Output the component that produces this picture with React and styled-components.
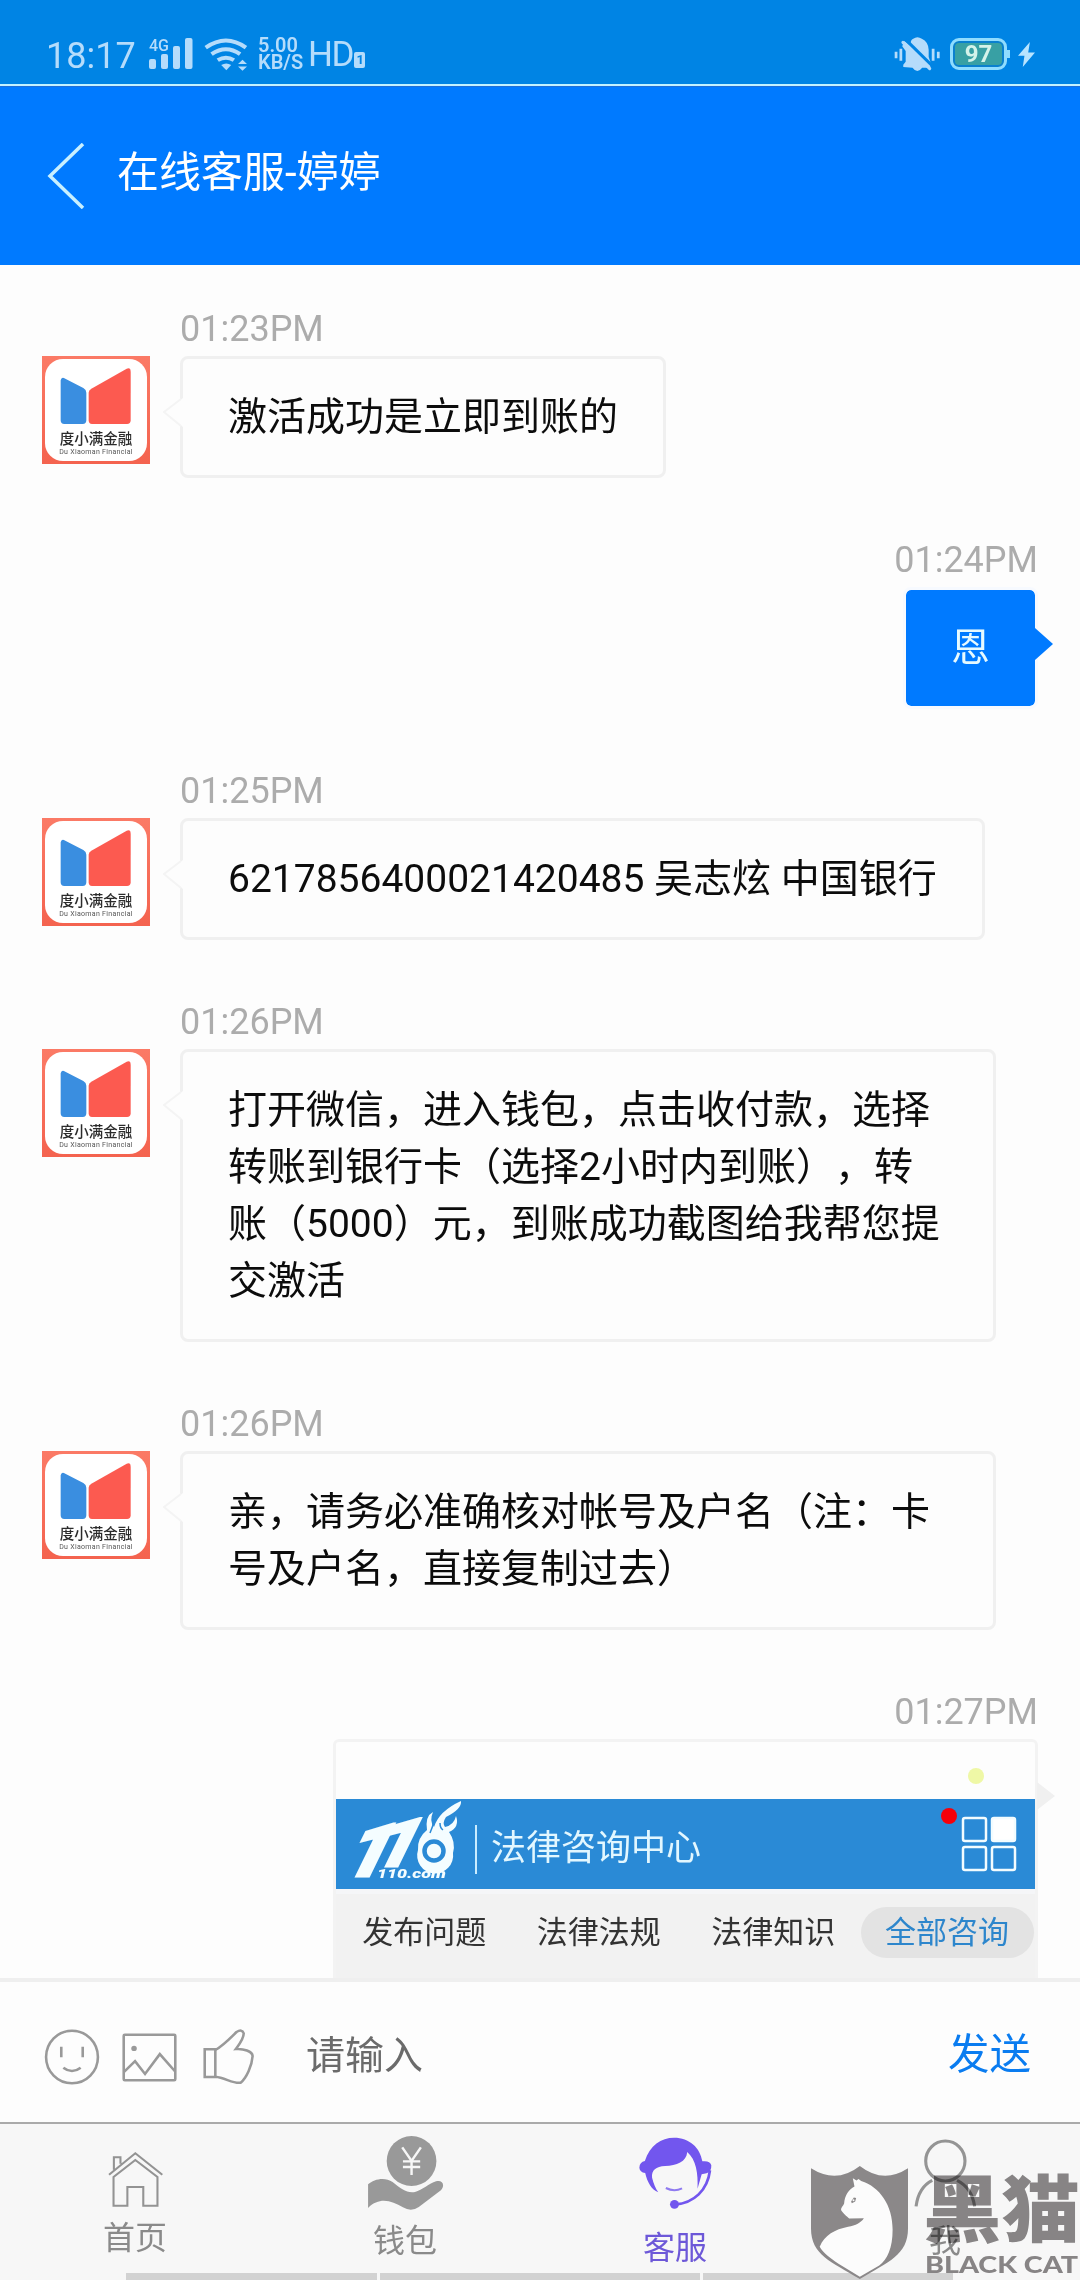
import React from "react";
import styled, { createGlobalStyle } from "styled-components";

const GlobalStyle = createGlobalStyle`
  * {
    box-sizing: border-box;
  }
  body {
    margin: 0;
    background: #fdfdfd;
    font-family: Roboto, "Noto Sans CJK SC", sans-serif;
    text-spacing-trim: space-all;
  }
  svg {
    display: block;
    flex: none;
  }
`;

const Screen = styled.div`
  position: relative;
  display: flex;
  flex-direction: column;
  width: 1080px;
  height: 2280px;
  overflow: hidden;
  background: #fdfdfd;
`;

const StatusBar = styled.div`
  display: flex;
  align-items: center;
  height: 86px;
  padding: 24px 45px 0 46px;
  border-bottom: 2px solid #c4f2ff;
  background: #0084e4;
  color: #b5dcfb;
`;

const Clock = styled.div`
  width: 103px;
  margin-top: 3px;
  font-size: 36px;
  line-height: 44px;
`;

const Speed = styled.div`
  width: 50px;
  margin-left: 10px;
  font-size: 20px;
  font-weight: 600;
  line-height: 17px;
`;

const Hd = styled.div`
  display: flex;
  align-items: flex-end;
  margin-top: 1px;
  font-size: 35px;
  line-height: 40px;
  letter-spacing: -1.5px;
`;

const SimBadge = styled.span`
  width: 11px;
  height: 16px;
  margin: 0 0 7px 1px;
  border-radius: 2px;
  background: #b5dcfb;
  color: #0084e4;
  font-size: 13px;
  font-weight: 700;
  line-height: 16px;
  text-align: center;
`;

const StatusRight = styled.div`
  display: flex;
  align-items: center;
  margin-left: auto;
`;

const Battery = styled.div`
  display: flex;
  align-items: center;
  justify-content: center;
  width: 57px;
  height: 32px;
  margin-left: 10px;
  border: 3px solid #8fdcff;
  border-radius: 9px;
  background: #38a0a4;
  box-shadow: inset 0 0 0 2px #0a80cf;
  color: #d4f3ea;
  font-size: 24px;
  font-weight: 700;
`;

const BatteryNub = styled.div`
  width: 3px;
  height: 8px;
  margin-right: 8px;
  background: #8fdcff;
`;

const Header = styled.div`
  display: flex;
  align-items: center;
  height: 179px;
  padding: 0 47px;
  border-top: 1px solid #1f6fd8;
  background: #007aff;
`;

const Title = styled.div`
  margin: -6px 0 0 30px;
  color: #fff;
  font-size: 42px;
  line-height: 60px;
`;

const Chat = styled.div`
  flex: none;
  height: 1713px;
  padding: 43px 42px 0;
  overflow: hidden;
`;

const Row = styled.div`
  display: flex;
  justify-content: ${(p) => (p.$mine ? "flex-end" : "flex-start")};
  margin-bottom: 61px;
`;

const AvatarFrame = styled.div`
  width: 108px;
  height: 108px;
  margin: 48px 30px 0 0;
  padding: 3px;
  background: linear-gradient(#fb7a66, #f4634f);
`;

const AvatarCard = styled.div`
  display: flex;
  flex-direction: column;
  align-items: center;
  height: 102px;
  padding-top: 8px;
  border-radius: 18px;
  background: #fff;
`;

const AvatarName = styled.div`
  margin-top: 6px;
  color: #2b2b2b;
  font-size: 14.5px;
  font-weight: 500;
  line-height: 18px;
  white-space: nowrap;
`;

const AvatarCaption = styled.div`
  color: #555;
  font-size: 7px;
  line-height: 6px;
  letter-spacing: 0.3px;
  white-space: nowrap;
`;

const Stack = styled.div`
  display: flex;
  flex-direction: column;
  align-items: ${(p) => (p.$mine ? "flex-end" : "flex-start")};
`;

const Time = styled.div`
  margin-bottom: 6px;
  color: #acacac;
  font-size: 36px;
  line-height: 42px;
`;

const Bubble = styled.div`
  position: relative;
  padding: 30px 45px 29px;
  border: 3px solid ${(p) => (p.$mine ? "#f7faff" : "#f0f0f0")};
  border-radius: 8px;
  background: ${(p) => (p.$mine ? "#007aff" : "#fdfdfd")};
  background-clip: padding-box;
  color: ${(p) => (p.$mine ? "#e6faff" : "#0c0c0c")};
  font-size: 39px;
  line-height: 57px;
  white-space: pre;
  ${(p) => p.$wide && "width: 816px;"}
`;

const Tail = styled.svg`
  position: absolute;
  top: 38px;
  ${(p) => (p.$mine ? `right: ${p.$offset || -18}px;` : "left: -20px;")}
`;

const Shot = styled.div`
  position: relative;
  width: 705px;
  height: 300px;
  border: 3px solid #f3f3f3;
  border-radius: 6px;
`;

const ShotTop = styled.div`
  display: flex;
  justify-content: flex-end;
  height: 57px;
  padding: 26px 51px 0 0;
`;

const Dot = styled.div`
  width: 16px;
  height: 16px;
  border-radius: 50%;
  background: ${(p) => p.$color};
`;

const SiteBar = styled.div`
  display: flex;
  align-items: center;
  height: 90px;
  padding: 0 18px 0 14px;
  background: #2a8ad6;
`;

const SiteDivider = styled.div`
  width: 2px;
  height: 49px;
  margin: 10px 14px 0 13px;
  background: #c9ecff;
`;

const SiteName = styled.div`
  margin-top: 9px;
  color: #e2f7ff;
  font-size: 35px;
  line-height: 50px;
`;

const SiteMenu = styled.div`
  display: flex;
  gap: 4px;
  margin-left: auto;

  ${Dot} {
    margin-top: -8px;
  }
`;

const SiteTabs = styled.div`
  display: flex;
  height: 150px;
  padding: 13px 0 0 1px;
  border-top: 5px solid #f5f6f8;
  background: #f2f2f2;
`;

const SiteTab = styled.div`
  width: ${(p) => (p.$active ? 173 : 174.5)}px;
  height: 51px;
  border-radius: 26px;
  background: ${(p) => (p.$active ? "#e3e3e3" : "none")};
  color: ${(p) => (p.$active ? "#2d86cc" : "#333")};
  font-size: 31px;
  line-height: 51px;
  text-align: center;
`;

const InputBar = styled.div`
  display: flex;
  align-items: center;
  flex: none;
  height: 144px;
  padding: 10px 49px 0 44px;
  border-top: 4px solid #efefef;
  background: #fdfdfd;
`;

const Placeholder = styled.div`
  margin: -2px 0 0 51px;
  color: #6b6b6b;
  font-size: 39px;
  line-height: 50px;
`;

const Send = styled.div`
  margin: -4px 0 0 auto;
  color: #0a7cf0;
  font-size: 41.5px;
  line-height: 50px;
`;

const TabBar = styled.div`
  display: flex;
  flex: none;
  height: 151px;
  border-top: 2px solid #aaa;
  background: #f7f7f7;
`;

const Tab = styled.div`
  display: flex;
  flex-direction: column;
  align-items: center;
  width: 270px;
  padding-top: ${(p) => p.$top}px;
  gap: ${(p) => p.$gap}px;
  color: ${(p) => (p.$active ? "#6d58d8" : "#8a8a8a")};
  font-size: 32px;
  line-height: 32px;
`;

const NavStrip = styled.div`
  display: flex;
  gap: 3px;
  flex: none;
  height: 7px;
  padding: 0 127px 0 126px;
  background: #f7f7f7;
`;

const NavPiece = styled.div`
  flex: ${(p) => p.$size};
  background: #d2d2d2;
`;

const Watermark = styled.div`
  position: absolute;
  right: 0;
  bottom: 0;
  display: flex;
  width: 269px;
  height: 114px;
  color: #8b8889;
`;

const WatermarkText = styled.div`
  margin-left: 16px;
  mix-blend-mode: multiply;
`;

const Drawing = ({ w, h, box, children, ...rest }) => (
  <svg width={w} height={h} viewBox={box} preserveAspectRatio="none" fill="none" {...rest}>
    {children}
  </svg>
);

const SignalIcon = () => (
  <Drawing w={44} h={32} box="0 0 44 32" fill="#b5dcfb">
    <text x="0" y="13" fontSize="16" fontWeight="500" fontFamily="Roboto">
      4G
    </text>
    <rect x="0" y="21" width="7" height="10" rx="2" />
    <rect x="12" y="16" width="7" height="15" rx="2" />
    <rect x="24" y="8" width="7" height="23" rx="2" />
    <rect x="36" y="0" width="7.5" height="31" rx="2" />
  </Drawing>
);

const WifiGap = styled.div`
  margin-left: 11px;
`;

const WifiIcon = () => (
  <WifiGap>
    <Drawing w={44} h={33} box="590 112 128 100" stroke="#b5dcfb" strokeWidth="12">
      <path d="M595 141Q654 98 712 141" />
      <path d="M612 161Q654 131 695 161" />
      <path d="M630 179Q654 164 677 179" />
      <path d="M640 194Q655 184 669 194L655 210Z" fill="#b5dcfb" stroke="none" />
      <path d="M689 191L702 178L715 191ZM689 198L702 211L715 198Z" fill="#b5dcfb" stroke="none" />
    </Drawing>
  </WifiGap>
);

const MuteIcon = () => (
  <Drawing w={46} h={36} box="1030 107 134 108">
    <path
      d="M1057 200V193L1064 184V152L1054 138L1060 122L1078 136Q1077 118 1086 115Q1098 106 1111 115Q1130 124 1131 148V170L1136 185V202H1112Q1098 222 1084 202Z"
      fill="#b5dcfb"
    />
    <path d="M1064 118L1142 197" stroke="#0084e4" strokeWidth="9" />
    <path d="M1056 126L1134 205" stroke="#b5dcfb" strokeWidth="9" strokeLinecap="round" />
    <path d="M1050 145V181M1144 145V181" stroke="#b5dcfb" strokeWidth="8" />
    <path d="M1036 154V174M1159 154V174" stroke="#b5dcfb" strokeWidth="8" />
  </Drawing>
);

const BoltIcon = () => (
  <Drawing w={17} h={25} box="1389 124 50 76">
    <path d="M1424 124L1389 166H1408L1403 200L1439 156H1419Z" fill="#b8e4ff" />
  </Drawing>
);

const BackIcon = () => (
  <Drawing w={40} h={66} box="0 0 40 66">
    <path d="M36 1L3 33L36 65" stroke="#c8f0ff" strokeWidth="3.5" />
  </Drawing>
);

const Avatar = () => (
  <AvatarFrame>
    <AvatarCard>
      <Drawing w={72} h={58} box="180 228 216 174">
        <path d="M182 268Q184 256 196 263L250 291Q259 296 259 305V388Q259 399 248 399H193Q182 399 182 388Z" fill="#3a8ee0" />
        <path d="M266 305Q266 298 274 293L380 233Q392 228 392 242V388Q392 399 381 399H276Q266 399 266 388Z" fill="#fc5a50" />
      </Drawing>
      <AvatarName>度小满金融</AvatarName>
      <AvatarCaption>Du Xiaoman Financial</AvatarCaption>
    </AvatarCard>
  </AvatarFrame>
);

const Message = ({ time, mine, wide, children }) => (
  <Row $mine={mine}>
    {!mine && <Avatar />}
    <Stack $mine={mine}>
      <Time>{time}</Time>
      <Bubble $mine={mine} $wide={wide}>
        {mine ? (
          <Tail $mine width="18" height="32" viewBox="0 0 18 32">
            <path d="M0 0L18 16L0 32Z" fill="#007aff" />
          </Tail>
        ) : (
          <Tail width="20" height="32" viewBox="0 0 20 32">
            <path d="M20 1L2 15L20 30Z" fill="#fdfdfd" />
            <path d="M18 2L1 15L18 29" fill="none" stroke="#f4f4f4" strokeWidth="2" />
          </Tail>
        )}
        {children}
      </Bubble>
    </Stack>
  </Row>
);

// Flaming "110" mark of the legal consulting site
const SiteLogo = () => (
  <Drawing w={112} h={90} box="0 0 112 90" fill="#f4fdff">
    <g fontFamily="Roboto" fontWeight="900">
      <g stroke="#f4fdff" strokeWidth="3">
        <text transform="translate(-11 77) skewX(-26)" fontSize="73">
          1
        </text>
        <text transform="translate(20 67) skewX(-26)" fontSize="67">
          1
        </text>
      </g>
      <text x="27" y="79" fontSize="12" fontStyle="italic" textLength="69" lengthAdjust="spacingAndGlyphs">
        110.com
      </text>
    </g>
    <path d="M68 51Q67 39 77 31Q75 17 83 13Q79 22 84 28Q89 12 111 2Q112 10 96 18Q92 24 95 28Q104 26 106 17Q110 28 99 33Q106 43 103 54A18 18 0 1 1 68 51Z" />
    <circle cx="84" cy="52" r="9.500" stroke="#2a8ad6" strokeWidth="4.500" />
    <path d="M84 20Q83 28 80 34M90 24Q90 29 93 31" stroke="#2a8ad6" strokeWidth="1.500" fill="none" />
  </Drawing>
);

const GridIcon = () => (
  <Drawing w={56} h={56} box="0 0 56 56" stroke="#f2fcff" strokeWidth="2.500">
    <rect x="2" y="2" width="23" height="23" rx="2" />
    <rect x="31" y="2" width="23" height="23" rx="2" fill="#fff" />
    <rect x="2" y="31" width="23" height="23" rx="2" />
    <rect x="31" y="31" width="23" height="23" rx="2" />
  </Drawing>
);

const InputIcons = styled.div`
  display: flex;
  align-items: center;
  width: 211px;

  svg:nth-child(2) {
    margin: 0 26px 0 22px;
  }
`;

const SmileIcon = () => (
  <Drawing w={56} h={56} box="128 175 162 168" stroke="#999" strokeWidth="7.500">
    <ellipse cx="209" cy="259" rx="75" ry="79" />
    <path d="M178 228V260M240 228V260M184 291Q209 311 234 291" />
  </Drawing>
);

const PictureIcon = () => (
  <Drawing w={55} h={49} box="356 185 160 146" stroke="#999" strokeWidth="7.500">
    <rect x="361" y="190" width="150" height="136" rx="3" />
    <circle cx="391" cy="231" r="8" fill="#999" stroke="none" />
    <path d="M362 301L394 269L423 307L466 248L510 299" />
  </Drawing>
);

const ThumbIcon = () => (
  <Drawing w={51} h={56} box="590 175 149 168" stroke="#999" strokeWidth="7.500">
    <path d="M595 236H626V319H595Z" />
    <path d="M626 238C648 226 670 202 688 184Q704 174 709 188C709 205 697 220 686 235C708 233 734 242 735 256C733 285 717 322 700 336C678 340 655 321 626 318" />
  </Drawing>
);

const HomeIcon = () => (
  <Drawing w={55} h={55} box="313 545 159 165" stroke="#939393" strokeWidth="6">
    <path d="M330 598V561H349V580M316 613L392 549L470 613" />
    <path d="M329 706V620L392 569L456 620V706H415V650H369V706Z" />
  </Drawing>
);

const WalletIcon = () => (
  <Drawing w={78} h={74} box="1067 497 226 222">
    <ellipse cx="1199" cy="572" rx="72" ry="75" fill="#999" />
    <path
      d="M1172 531L1199 572L1226 531M1199 572V614M1174 573H1224M1174 590H1224"
      stroke="#f7f7f7"
      strokeWidth="7"
    />
    <path
      d="M1073 642C1090 626 1122 619 1144 635C1167 655 1187 670 1209 665C1230 659 1250 640 1270 633C1289 628 1297 645 1284 660L1220 710Q1198 726 1174 711C1142 692 1107 678 1073 713Z"
      fill="#999"
    />
  </Drawing>
);

const ServiceIcon = () => (
  <Drawing w={73} h={72} box="286 500 212 216">
    <path
      d="M303 572C318 525 350 502 388 502C432 502 464 532 470 573Q492 570 496 585Q497 605 482 609L468 612L456 655C458 610 452 568 426 545C424 575 395 586 362 587C335 588 322 600 324 622C328 640 335 655 342 666C322 658 310 635 304 608Q288 605 287 592Q288 575 303 572Z"
      fill="#7256ee"
    />
    <path d="M364 653Q388 666 411 654" stroke="#8f7af0" strokeWidth="6" />
    <path d="M492 600C485 660 445 698 392 702" stroke="#7256ee" strokeWidth="8" />
    <circle cx="389" cy="702" r="13" fill="#7256ee" />
  </Drawing>
);

const UserIcon = () => (
  <Drawing w={62} h={68} box="1089 508 180 204" stroke="#949494" strokeWidth="9">
    <ellipse cx="1180" cy="574" rx="57" ry="60" />
    <path d="M1095 710C1100 670 1115 646 1142 632M1214 632C1245 648 1260 675 1265 710" />
  </Drawing>
);

const CatShield = () => (
  <Drawing w={97} h={114} box="94 77 290 343">
    <path
      d="M94 84Q170 132 240 77Q310 132 384 84V265C384 345 325 365 240 417C155 365 94 345 94 265Z"
      fill="#8b8889"
    />
    <path
      d="M219 114L230 121L236 116L244 122C300 140 338 195 338 268C338 325 322 358 298 376L240 410L175 370C148 352 130 338 120 320C135 285 165 268 205 260C228 255 243 248 252 234L208 235C200 228 194 224 185 212C181 204 190 198 193 190C195 165 207 148 224 139Z"
      fill="#fcfcfc"
    />
    <path d="M214 184L222 172L229 173L226 184L216 189Z" fill="#8b8889" />
    <circle cx="221" cy="180" r="3" fill="#fcfcfc" />
  </Drawing>
);

const App = () => (
  <Screen lang="zh-CN">
    <GlobalStyle />
    <StatusBar>
      <Clock>18:17</Clock>
      <SignalIcon />
      <WifiIcon />
      <Speed>
        5.00
        <br />
        KB/S
      </Speed>
      <Hd>
        HD<SimBadge>1</SimBadge>
      </Hd>
      <StatusRight>
        <MuteIcon />
        <Battery>97</Battery>
        <BatteryNub />
        <BoltIcon />
      </StatusRight>
    </StatusBar>
    <Header>
      <BackIcon />
      <Title>在线客服-婷婷</Title>
    </Header>
    <Chat>
      <Message time="01:23PM">激活成功是立即到账的</Message>
      <Message time="01:24PM" mine>
        恩
      </Message>
      <Message time="01:25PM">6217856400021420485 吴志炫 中国银行</Message>
      <Message time="01:26PM" wide>
        {"打开微信，进入钱包，点击收付款，选择\n转账到银行卡（选择2小时内到账），转\n账（5000）元，到账成功截图给我帮您提\n交激活"}
      </Message>
      <Message time="01:26PM" wide>
        {"亲，请务必准确核对帐号及户名（注：卡\n号及户名，直接复制过去）"}
      </Message>
      <Row $mine>
        <Stack $mine>
          <Time>01:27PM</Time>
          <Shot>
            <Tail $mine $offset={-20} width="18" height="32" viewBox="0 0 18 32">
              <path d="M0 2L18 16L0 30Z" fill="#f0f0f0" />
            </Tail>
            <ShotTop>
              <Dot $color="#eff8a6" />
            </ShotTop>
            <SiteBar>
              <SiteLogo />
              <SiteDivider />
              <SiteName>法律咨询中心</SiteName>
              <SiteMenu>
                <Dot $color="#f5000a" />
                <GridIcon />
              </SiteMenu>
            </SiteBar>
            <SiteTabs>
              <SiteTab>发布问题</SiteTab>
              <SiteTab>法律法规</SiteTab>
              <SiteTab>法律知识</SiteTab>
              <SiteTab $active>全部咨询</SiteTab>
            </SiteTabs>
          </Shot>
        </Stack>
      </Row>
    </Chat>
    <InputBar>
      <InputIcons>
        <SmileIcon />
        <PictureIcon />
        <ThumbIcon />
      </InputIcons>
      <Placeholder>请输入</Placeholder>
      <Send>发送</Send>
    </InputBar>
    <TabBar>
      <Tab $top={28} $gap={15}>
        <HomeIcon />
        首页
      </Tab>
      <Tab $top={12} $gap={15}>
        <WalletIcon />
        钱包
      </Tab>
      <Tab $top={13} $gap={23} $active>
        <ServiceIcon />
        客服
      </Tab>
      <Tab $top={15} $gap={18}>
        <UserIcon />
        我
      </Tab>
    </TabBar>
    <NavStrip>
      <NavPiece $size={251} />
      <NavPiece $size={320} />
      <NavPiece $size={250} />
    </NavStrip>
    <Watermark>
      <CatShield />
      <WatermarkText>
        <Drawing w={156} h={114} box="0 0 156 114" fill="#8b8889">
          <text
            x="-1"
            y="70"
            fontSize="73"
            fontWeight="900"
            fontFamily="Noto Sans CJK SC"
            textLength="157"
            lengthAdjust="spacingAndGlyphs"
          >
            黑猫
          </text>
          <text
            x="1"
            y="107"
            fontSize="23.500"
            fontWeight="900"
            fontFamily="Lato"
            textLength="153"
            lengthAdjust="spacingAndGlyphs"
          >
            BLACK CAT
          </text>
        </Drawing>
      </WatermarkText>
    </Watermark>
  </Screen>
);

export default App;
